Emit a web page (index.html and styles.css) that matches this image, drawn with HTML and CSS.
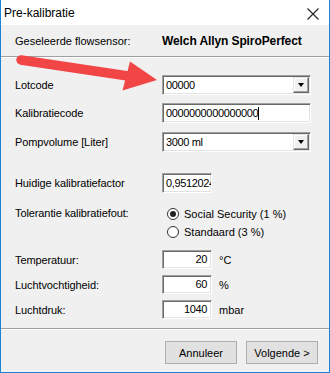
FILE: index.html
```html
<!DOCTYPE html>
<html>
<head>
<meta charset="utf-8">
<link rel="stylesheet" href="styles.css">
</head>
<body>
<div class="window">
  <div class="titlebar">
    <span class="title">Pre-kalibratie</span>
    <svg class="close" width="12" height="12" viewBox="0 0 12 12"><path d="M0.5 0.5 L11.5 11.5 M11.5 0.5 L0.5 11.5" stroke="#222" stroke-width="1.1" fill="none"/></svg>
  </div>
  <div class="client">
    <div class="header">
      <span class="lbl">Geseleerde flowsensor:</span>
      <span class="sensor">Welch Allyn SpiroPerfect</span>
    </div>
    <div class="sep"></div>
    <div class="form">
      <div class="row r-lot">
        <span class="lbl">Lotcode</span>
        <div class="field combo"><span class="val">00000</span><span class="dd"><span class="tri"></span></span></div>
      </div>
      <div class="row r-kal">
        <span class="lbl">Kalibratiecode</span>
        <div class="field wide"><span class="val">0000000000000000</span><span class="caret"></span></div>
      </div>
      <div class="row r-pomp">
        <span class="lbl">Pompvolume [Liter]</span>
        <div class="field combo"><span class="val">3000 ml</span><span class="dd"><span class="tri"></span></span></div>
      </div>
      <div class="row r-fac">
        <span class="lbl">Huidige kalibratiefactor</span>
        <div class="field small clip"><span class="val">0,95120244</span></div>
      </div>
      <div class="row r-tol">
        <span class="lbl">Tolerantie kalibratiefout:</span>
        <div class="radios">
          <div class="radio"><span class="dot on"></span><span>Social Security (1 %)</span></div>
          <div class="radio"><span class="dot"></span><span>Standaard (3 %)</span></div>
        </div>
      </div>
      <div class="row r-temp">
        <span class="lbl">Temperatuur:</span>
        <div class="field small num"><span class="val">20</span></div>
        <span class="unit">°C</span>
      </div>
      <div class="row r-hum">
        <span class="lbl">Luchtvochtigheid:</span>
        <div class="field small num"><span class="val">60</span></div>
        <span class="unit">%</span>
      </div>
      <div class="row r-druk">
        <span class="lbl">Luchtdruk:</span>
        <div class="field small num"><span class="val">1040</span></div>
        <span class="unit">mbar</span>
      </div>
    </div>
    <div class="sep sep2"></div>
    <div class="buttons">
      <button class="btn">Annuleer</button>
      <button class="btn">Volgende &gt;</button>
    </div>
    <svg class="arrow" width="170" height="100" viewBox="0 0 170 100">
      <line x1="21" y1="60" x2="128" y2="76" stroke="#f24646" stroke-width="9.5" stroke-linecap="round"/>
      <polygon points="130,61.5 157,80 122.5,90.5" fill="#f24646"/>
    </svg>
  </div>
</div>
</body>
</html>
```
FILE: styles.css
```css
html, body { margin: 0; padding: 0; }
body { width: 330px; height: 373px; overflow: hidden; background: #fff; font-family: "Liberation Sans", Arial, sans-serif; font-size: 11px; color: #000; }
.window { width: 330px; height: 373px; box-sizing: border-box; border: 1px solid #1883d7; border-top: none; display: flex; flex-direction: column; background: #f0f0f0; }
.titlebar { height: 25px; background: #fff; display: flex; align-items: center; justify-content: space-between; padding: 0 10px 0 3px; flex: none; }
.title { font-size: 12px; color: #000; }
.close { margin-top: 2px; }
.client { position: relative; flex: 1; display: flex; flex-direction: column; }
.header { height: 31px; display: flex; align-items: center; padding-left: 14px; }
.header .lbl { width: 147px; }
.sensor { font-weight: bold; font-size: 12px; letter-spacing: -0.1px; }
.sep { height: 0; border-top: 1px solid #a0a0a0; border-bottom: 1px solid #fff; }
.form { display: flex; flex-direction: column; padding-left: 14px; }
.row { display: flex; align-items: center; }
.row .lbl { width: 147px; flex: none; letter-spacing: -0.1px; }
.r-lot { margin-top: 17px; }
.r-kal { margin-top: 8px; }
.r-pomp { margin-top: 9px; }
.r-fac { margin-top: 21px; }
.r-tol { margin-top: 14px; align-items: flex-start; }
.r-temp { margin-top: 12px; }
.r-hum { margin-top: 6px; }
.r-druk { margin-top: 6px; }
.field { box-sizing: border-box; height: 20px; background: #fff; border: 1px solid; border-color: #a0a0a0 #fff #fff #a0a0a0; box-shadow: inset 1px 1px 0 #696969, inset -1px -1px 0 #e3e3e3; display: flex; align-items: center; padding-left: 3px; position: relative; }
.clip { overflow: hidden; white-space: nowrap; }
.combo, .wide { width: 149px; }
.small { width: 50px; }
.num { justify-content: flex-end; padding-right: 4px; padding-left: 0; }
.r-temp .field, .r-hum .field, .r-druk .field { height: 19px; }
.val { line-height: 1; letter-spacing: -0.35px; flex: none; }
.caret { width: 1px; height: 13px; background: #000; margin-left: 0; }
.dd { margin-left: auto; margin-right: 1px; width: 16px; height: 16px; box-sizing: border-box; background: #f0f0f0; border: 1px solid; border-color: #e3e3e3 #696969 #696969 #e3e3e3; box-shadow: inset -1px -1px 0 #a0a0a0, inset 1px 1px 0 #fff; display: flex; align-items: center; justify-content: center; }
.tri { width: 0; height: 0; border-left: 3.5px solid transparent; border-right: 3.5px solid transparent; border-top: 4px solid #000; }
.radios { display: flex; flex-direction: column; gap: 5px; padding-left: 5px; }
.radio { display: flex; align-items: center; gap: 5px; height: 13px; }
.dot { width: 12px; height: 12px; box-sizing: border-box; border: 1px solid #333; border-radius: 50%; background: #fff; display: flex; align-items: center; justify-content: center; }
.dot.on::after { content: ""; width: 6px; height: 6px; border-radius: 50%; background: #222; }
.unit { margin-left: 7px; }
.sep2 { margin-top: 9px; }
.buttons { display: flex; justify-content: flex-end; gap: 9px; padding: 11px 11px 0 0; }
.btn { width: 72px; height: 23px; box-sizing: border-box; background: #e1e1e1; border: 1px solid #adadad; font-family: "Liberation Sans", Arial, sans-serif; font-size: 11px; color: #000; padding: 0; }
.arrow { position: absolute; left: -1px; top: -25px; pointer-events: none; }
```
